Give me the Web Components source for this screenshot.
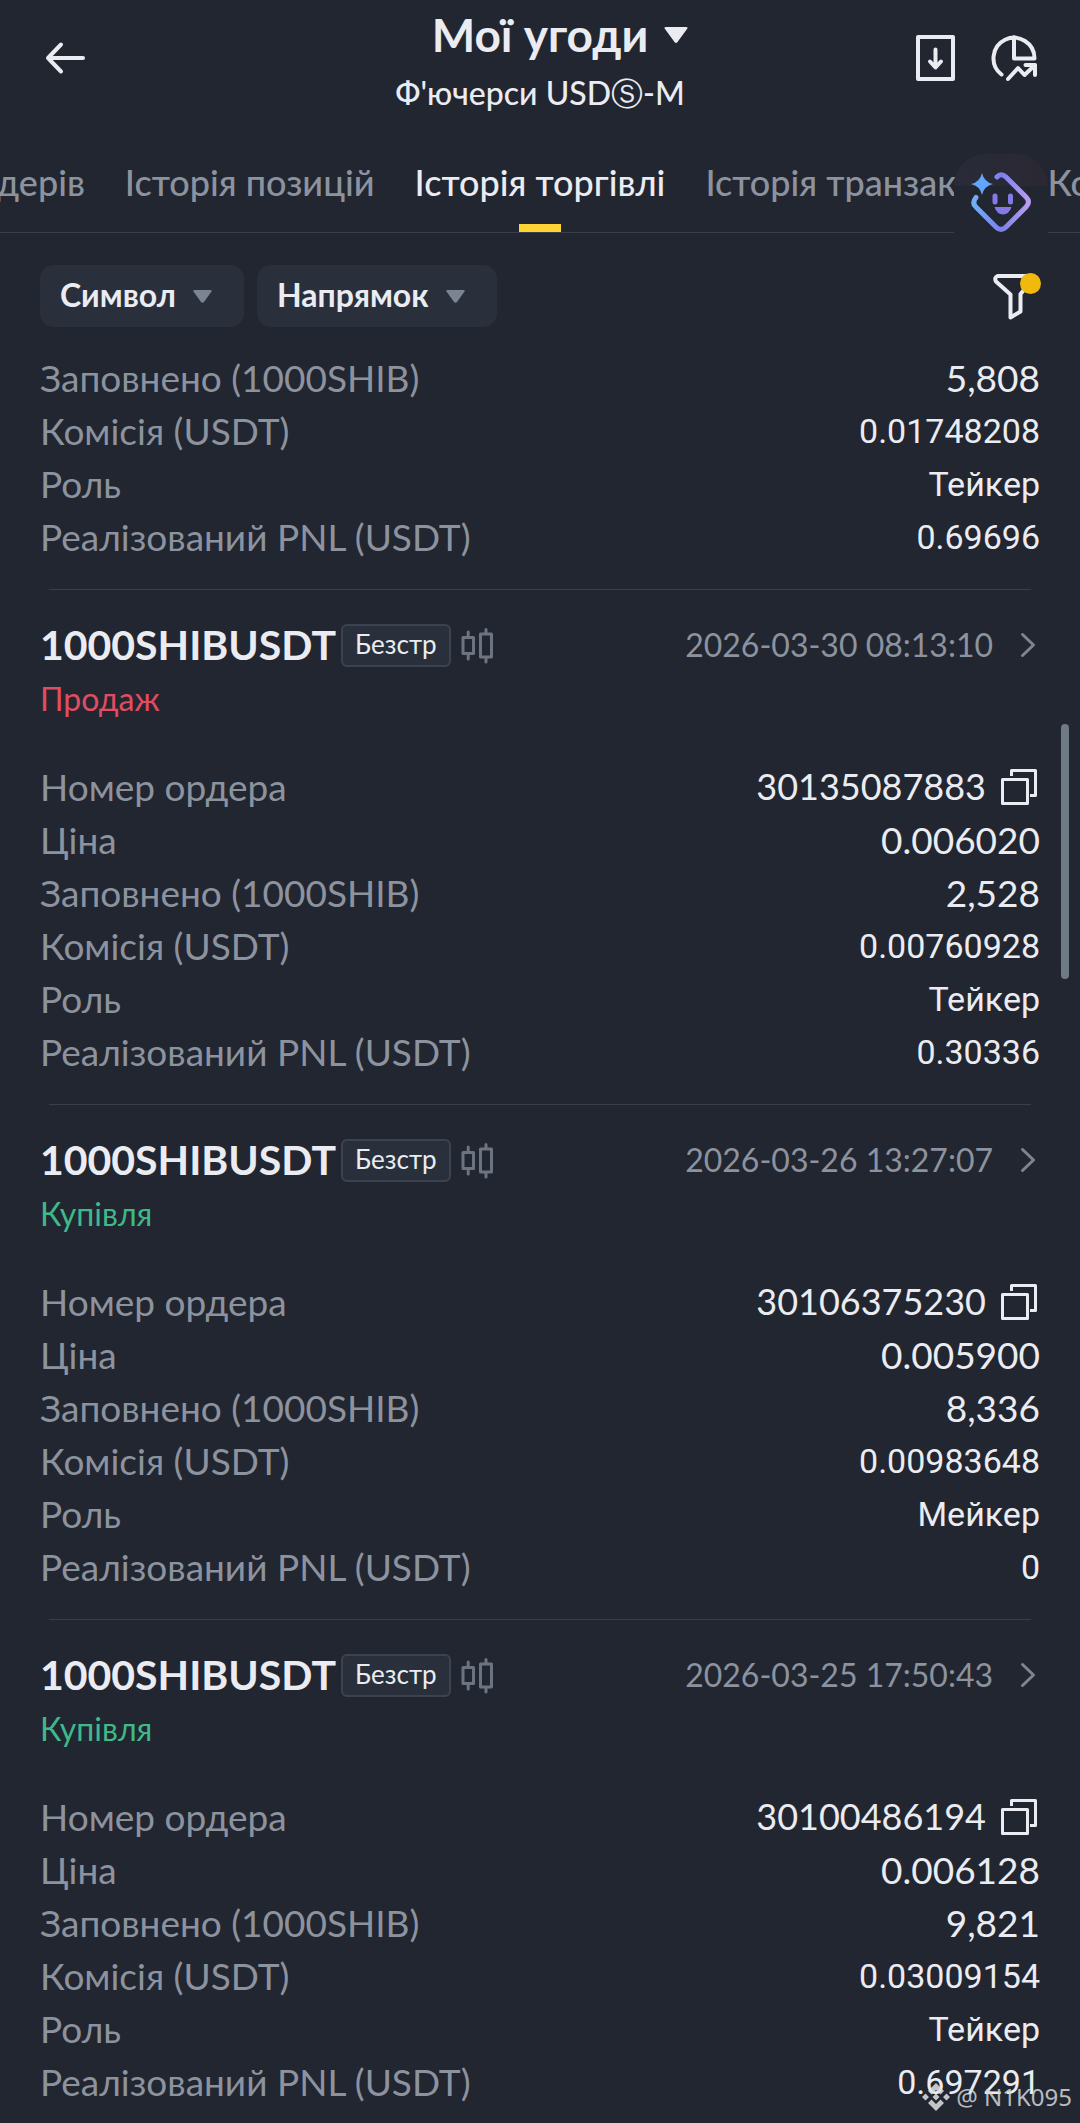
<!DOCTYPE html>
<html lang="uk">
<head>
<meta charset="utf-8">
<meta name="viewport" content="width=device-width, initial-scale=1">
<title>Мої угоди</title>
<style>
  :root {
    --bg: #222630;
    --text: #eaecf2;
    --muted: #8c939f;
    --chip: #29303c;
    --line: #383e4a;
    --sell: #e04d60;
    --buy: #3fb98a;
    --accent: #fcd535;
    --side: 40px;
    --font: Lato, "Noto Sans", sans-serif;
    --font-num: Roboto, "Noto Sans", sans-serif;
  }
  body {
    margin: 0;
    background: var(--bg);
    color: var(--text);
    font-family: var(--font);
  }
</style>
</head>
<body>
<trade-app></trade-app>

<script>
class BaseElement extends HTMLElement {
  connectedCallback() {
    if (this.shadowRoot) return;
    this.attachShadow({ mode: "open" }).innerHTML = `
      <style>
        :host { display: block; }
        * { box-sizing: border-box; }
        button { all: unset; box-sizing: border-box; cursor: pointer; }
        a { color: inherit; text-decoration: none; }
        svg { display: block; flex: none; overflow: visible; }
      </style>` + this.render();
  }
  attr(name) { return this.getAttribute(name) || ""; }
}

customElements.define("trade-header", class extends BaseElement {
  render() {
    return `
      <style>
        header { display: grid; grid-template-columns: 1fr auto 1fr; align-items: start; padding: 6px var(--side) 0; height: 144px; }
        .back, .actions { display: flex; align-items: center; padding-top: 29px; }
        .back { padding-left: 5px; }
        .back button { height: 46px; display: flex; align-items: center; }
        .actions { justify-content: flex-end; gap: 36px; padding-right: 3px; }
        .title { text-align: center; }
        h1 { margin: 0; font-size: 46px; line-height: 58px; font-weight: 700; }
        h1 button { display: flex; align-items: center; justify-content: center; gap: 16px; }
        h1 button::before { content: ""; width: 24px; }
        p { margin: 0; font-size: 32px; line-height: 58px; font-weight: 500; }
      </style>
      <header>
        <div class="back"><button aria-label="Назад">
          <svg width="40" height="32" viewBox="0 0 40 32" fill="none" stroke="#eaecf2" stroke-width="4" stroke-linecap="round" stroke-linejoin="round"><path d="M38 16H3M16 2.500L3 16l13 13.500"/></svg>
        </button></div>
        <div class="title">
          <h1><button aria-haspopup="true">Мої угоди
            <svg width="24" height="17" viewBox="0 0 24 17" fill="#eaecf2"><path d="M2 0h20q2.500 0 1 2L13.500 15q-1.500 2-3 0L1 2Q-.5 0 2 0z"/></svg>
          </button></h1>
          <p>Ф'ючерси USDⓈ-M</p>
        </div>
        <div class="actions">
          <button aria-label="Експорт">
            <svg width="39" height="46" viewBox="0 0 39 46" fill="none" stroke="#eaecf2" stroke-width="4" stroke-linecap="round" stroke-linejoin="round"><path d="M2 2h35v42H2z"/><path d="M19.500 14.500v17.500M14 26.500l5.500 6 5.500-6"/></svg>
          </button>
          <button aria-label="Аналітика">
            <svg width="46" height="46" viewBox="0 0 46 46" fill="none" stroke="#eaecf2" stroke-width="4" stroke-linecap="round" stroke-linejoin="round"><path d="M10.500 39.500A20.500 20.500 0 1 1 43.500 23.500H23V2.500"/><path d="M17 44l10-11 6.500 7L44 30M34.500 30H44v10"/></svg>
          </button>
        </div>
      </header>`;
  }
});

customElements.define("trade-tabs", class extends BaseElement {
  render() {
    return `
      <style>
        nav { display: grid; grid-template-columns: 1fr auto 1fr; gap: 40px; height: 89px; overflow: hidden; border-bottom: 1px solid var(--line);
              font-size: 36px; line-height: 76px; font-weight: 500; white-space: nowrap; color: var(--muted); }
        div { display: flex; gap: 40px; min-width: 0; }
        .before { justify-content: flex-end; }
        a[aria-current] { color: var(--text); display: flex; flex-direction: column; align-items: center; justify-content: space-between; }
        a[aria-current]::after { content: ""; width: 42px; height: 8px; background: var(--accent); }
      </style>
      <nav>
        <div class="before"><a href="#orders">дерів</a><a href="#positions">Історія позицій</a></div>
        <a href="#trades" aria-current="page">Історія торгівлі</a>
        <div><a href="#transactions">Історія транзакцій</a><a href="#more">Ко</a></div>
      </nav>`;
  }
});

customElements.define("filter-select", class extends BaseElement {
  render() {
    return `
      <style>
        label { display: grid; align-items: center; background: var(--chip); border-radius: 14px; height: 62px; }
        select { grid-area: 1 / 1; appearance: none; border: 0; margin: 0; background: none; color: var(--text);
                 font: 700 32px/60px var(--font); height: 62px; padding: 0 68px 2px 20px; outline: none; }
        svg { grid-area: 1 / 1; justify-self: end; margin-right: 32px; pointer-events: none; }
      </style>
      <label>
        <select aria-label="${this.attr("label")}"><option>${this.attr("label")}</option></select>
        <svg width="19" height="13" viewBox="0 0 19 13" fill="#7b8491"><path d="M1.500 0h16q2 0 1 1.500L11 12q-1.500 1.500-3 0L.5 1.500Q-.5 0 1.500 0z"/></svg>
      </label>`;
  }
});

customElements.define("filter-bar", class extends BaseElement {
  render() {
    return `
      <style>
        div { display: flex; align-items: center; gap: 13px; padding: 32px var(--side) 25px; }
        button { margin-left: auto; padding: 2px 4px 0 0; }
      </style>
      <div>
        <filter-select label="Символ"></filter-select>
        <filter-select label="Напрямок"></filter-select>
        <button aria-label="Фільтр">
          <svg width="43" height="46" viewBox="0 0 43 46"><path d="M4.500 2h32q3.500 1 2 5L27.500 20v17.500L17.500 43.500V20.500L3 7.500Q1 3.500 4.500 2z" fill="none" stroke="#eaecf2" stroke-width="4" stroke-linejoin="round"/><circle cx="37.500" cy="9.500" r="10.500" fill="#f0b90b"/></svg>
        </button>
      </div>`;
  }
});

customElements.define("trade-details", class extends BaseElement {
  render() {
    const order = this.attr("order");
    const rows = [];
    if (order) {
      rows.push(`<div><dt>Номер ордера</dt><dd class="order">${order}<button aria-label="Копіювати">
        <svg width="36" height="36" viewBox="0 0 36 36" fill="none" stroke="#eaecf2" stroke-width="3" stroke-linejoin="round"><path d="M1.500 10.500h25v24h-25zM10.500 7V1.500h24v25H29"/></svg></button></dd></div>`);
      rows.push(`<div><dt>Ціна</dt><dd>${this.attr("price")}</dd></div>`);
    }
    rows.push(`<div><dt>Заповнено (1000SHIB)</dt><dd>${this.attr("filled")}</dd></div>`);
    rows.push(`<div><dt>Комісія (USDT)</dt><dd class="num">${this.attr("fee")}</dd></div>`);
    rows.push(`<div><dt>Роль</dt><dd class="num">${this.attr("role-name")}</dd></div>`);
    rows.push(`<div><dt>Реалізований PNL (USDT)</dt><dd class="num">${this.attr("pnl")}</dd></div>`);
    return `
      <style>
        dl { margin: 0; font-size: 37px; line-height: 51px; }
        div { display: flex; justify-content: space-between; align-items: flex-start; height: 53px; }
        dt { color: var(--muted); }
        dd { margin: 0; display: flex; align-items: center; gap: 15px; }
        dd button { padding-right: 3px; }
        .order { font-size: 36px; }
        .num { font-family: var(--font-num); font-size: 34px; line-height: 53px; }
      </style>
      <dl>${rows.join("")}</dl>`;
  }
});

customElements.define("trade-card", class extends BaseElement {
  render() {
    const sell = this.attr("side") === "sell";
    return `
      <style>
        article { padding-top: 30px; }
        .head { display: flex; align-items: center; height: 50px; }
        h2 { margin: 0; font-size: 41px; line-height: 50px; font-weight: 700; }
        .tag { margin-left: 5px; height: 43px; padding: 0 12px; border: 2px solid #3b4350; border-radius: 6px; background: var(--chip); font-size: 26px; line-height: 36px; }
        .head svg { margin-left: 10px; }
        .when { margin-left: auto; display: flex; align-items: center; color: var(--muted); font-size: 32px; line-height: 50px; }
        .when svg { margin-left: 28px; margin-right: 5px; }
        .side { margin: 3px 0 36px; font-size: 32px; line-height: 52px; color: var(--${sell ? "sell" : "buy"}); }
      </style>
      <article>
        <div class="head">
          <h2>1000SHIBUSDT</h2><span class="tag">Безстр</span>
          <svg width="32" height="35" viewBox="0 0 32 35" fill="none" stroke="#6c7481" stroke-width="3" stroke-linecap="round" stroke-linejoin="round"><path d="M2 9.500h10.500v16H2zM7.200 4v5.500M7.200 25.500V31M19.500 6h11v23h-11zM25 1.500V6M25 29v5"/></svg>
          <a class="when" href="#details"><time>${this.attr("time")}</time>
            <svg width="14" height="24" viewBox="0 0 14 24" fill="none" stroke="#7d8592" stroke-width="3" stroke-linecap="round" stroke-linejoin="round"><path d="M1.500 1.500L12.500 12 1.500 22.500"/></svg></a>
        </div>
        <p class="side">${sell ? "Продаж" : "Купівля"}</p>
        <slot></slot>
      </article>`;
  }
});

customElements.define("ai-assistant", class extends BaseElement {
  render() {
    return `
      <style>
        :host { position: absolute; top: 154px; right: 32px; }
        button { display: grid; justify-items: center; width: 94px; height: 90px; padding-top: 18px; border-radius: 32px 32px 0 0;
                 background: linear-gradient(90deg, #282b3a, #2b2832) top / 100% 32px no-repeat, var(--bg); }
      </style>
      <button aria-label="Помічник">
        <svg width="60" height="60" viewBox="0 0 60 60" stroke-linecap="round">
          <defs><linearGradient id="g" x1="0" y1="0" x2="60" y2="0" gradientUnits="userSpaceOnUse"><stop offset="0" stop-color="#6fb4f4"/><stop offset=".5" stop-color="#7b80ee"/><stop offset="1" stop-color="#bfa0ee"/></linearGradient></defs>
          <path d="M26 5Q30 .5 35 5L55 25Q60 30 55 35L35 55Q30 60 25 55L5 35Q.5 31 5 25.500" fill="none" stroke="url(#g)" stroke-width="5"/>
          <path d="M11 1Q13 10 22 12Q13 14 11 23Q9 14 0 12Q9 10 11 1z" fill="#62a5fb"/>
          <path d="M24 24v6M39.500 24v6" stroke="#8579ea" stroke-width="5"/>
          <path d="M23.500 35h17Q38 42.500 32 42.500T23.500 35z" fill="#8579ea"/>
        </svg>
      </button>`;
  }
});

customElements.define("scroll-thumb", class extends BaseElement {
  render() {
    return `<style>:host { position: absolute; top: 724px; right: 11px; width: 8px; height: 255px; border-radius: 4px; background: #707986; }</style>`;
  }
});

customElements.define("author-mark", class extends BaseElement {
  render() {
    return `
      <style>
        :host { position: absolute; right: 8px; bottom: 10px; opacity: .85; }
        span { display: flex; align-items: center; gap: 6px; font: 24px/32px "Noto Sans", sans-serif; color: #d4d6da; }
      </style>
      <span><svg width="28" height="30" viewBox="0 0 28 30" fill="#e0e1e4"><path d="M14 1l8 8-3.500 3.500L14 8l-4.500 4.500L6 9zM14 29l8-8-3.500-3.500L14 22l-4.500-4.500L6 21zM14 11.500l3.500 3.500-3.500 3.500-3.500-3.500zM3.500 11.500L7 15l-3.500 3.500L0 15zM24.500 11.500L28 15l-3.500 3.500L21 15z"/></svg>@ N1K095</span>`;
  }
});

customElements.define("trade-app", class extends BaseElement {
  render() {
    return `
      <style>
        :host { position: relative; min-height: 100vh; overflow: hidden; }
        main { padding: 0 var(--side); }
        hr { border: 0; height: 1px; margin: 25px 9px 0; background: var(--line); }
      </style>
      <trade-header></trade-header>
      <trade-tabs></trade-tabs>
      <filter-bar></filter-bar>
      <main>
        <trade-details filled="5,808" fee="0.01748208" role-name="Тейкер" pnl="0.69696"></trade-details>
        <hr>
        <trade-card side="sell" time="2026-03-30 08:13:10">
          <trade-details order="30135087883" price="0.006020" filled="2,528" fee="0.00760928" role-name="Тейкер" pnl="0.30336"></trade-details>
        </trade-card>
        <hr>
        <trade-card side="buy" time="2026-03-26 13:27:07">
          <trade-details order="30106375230" price="0.005900" filled="8,336" fee="0.00983648" role-name="Мейкер" pnl="0"></trade-details>
        </trade-card>
        <hr>
        <trade-card side="buy" time="2026-03-25 17:50:43">
          <trade-details order="30100486194" price="0.006128" filled="9,821" fee="0.03009154" role-name="Тейкер" pnl="0.697291"></trade-details>
        </trade-card>
      </main>
      <ai-assistant></ai-assistant>
      <scroll-thumb></scroll-thumb>
      <author-mark></author-mark>`;
  }
});
</script>
</body>
</html>
